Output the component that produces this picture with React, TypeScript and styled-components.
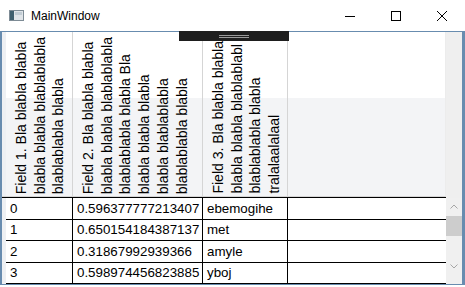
import React from 'react'
import styled, { createGlobalStyle } from 'styled-components'

const GlobalStyle = createGlobalStyle`
  html, body {
    margin: 0;
    padding: 0;
    background: #fff;
  }
  body {
    font-family: "Liberation Sans", Arial, sans-serif;
    color: #000;
  }
`

const Window = styled.div`
  position: relative;
  width: 465px;
  height: 287px;
  overflow: hidden;
  display: flex;
  flex-direction: column;
  background: #fff;
`

const TitleBar = styled.div`
  flex: none;
  height: 31px;
  display: flex;
  align-items: center;
  padding-left: 9px;
`

const Title = styled.span`
  flex: 1;
  margin-left: 7px;
  font-size: 12px;
`

const CaptionButton = styled.div`
  width: 46px;
  height: 31px;
  display: flex;
  align-items: center;
  justify-content: center;
`

const Client = styled.div`
  flex: none;
  height: 252px;
  display: flex;
  border: 1px solid #688caf;
  border-left-width: 2px;
  border-right-width: 3px;
`

const GridArea = styled.div`
  flex: 1;
  min-width: 0;
  display: flex;
  flex-direction: column;
  overflow: hidden;
`

const RowGrid = styled.div`
  display: grid;
  grid-template-columns: 4px 67px 130px 85px 1fr;
`

const HeaderRow = styled(RowGrid)`
  flex: none;
  height: 165px;
  border-bottom: 1px solid #000;
`

const Corner = styled.div`
  background: #eef0f3;
  border-bottom: 1px solid #d5d5d5;
`

const ColumnHeader = styled.div<{ filler?: boolean }>`
  display: flex;
  align-items: flex-end;
  padding: 0 0 2px 6px;
  overflow: hidden;
  background: linear-gradient(to bottom, #fff 0, #fff 40%, #f3f4f6 40%, #f3f4f6 100%);
  border-right: 1px solid ${p => (p.filler ? '#ececec' : '#d5d5d5')};
  border-bottom: 1px solid #d5d5d5;
`

const HeaderText = styled.div`
  writing-mode: vertical-rl;
  transform: rotate(180deg);
  font-size: 14px;
  line-height: 18.7px;
  white-space: nowrap;
`

const DataRow = styled(RowGrid)`
  height: 21.5px;
`

const RowHeader = styled.div`
  background: #eef0f3;
`

const Cell = styled.div<{ last?: boolean }>`
  display: flex;
  align-items: center;
  padding-left: 4px;
  font-size: 13.33px;
  white-space: nowrap;
  overflow: hidden;
  border-bottom: 1px solid #000;
  border-right: ${p => (p.last ? 'none' : '1px solid #000')};
`

const ScrollColumn = styled.div`
  flex: none;
  width: 16px;
  display: flex;
  flex-direction: column;
  background: #f0f0f0;
`

const ScrollCorner = styled.div`
  flex: none;
  height: 166px;
  background: #efefef;
`

const ArrowButton = styled.div`
  flex: none;
  height: 17px;
  display: flex;
  align-items: center;
  justify-content: center;
`

const Track = styled.div`
  flex: 1;
  padding-top: 1px;
`

const Thumb = styled.div`
  height: 20px;
  background: #cdcdcd;
`

const BottomSpacer = styled.div`
  flex: none;
  height: 9px;
`

const InAppToolbar = styled.div`
  position: absolute;
  left: 179px;
  top: 31px;
  width: 110px;
  height: 10px;
  background: #1e1e1e;
  display: flex;
  align-items: center;
  justify-content: center;
`

const Grip = styled.div`
  width: 30px;
  height: 1px;
  border-top: 1px solid #9a9a9a;
  border-bottom: 1px solid #9a9a9a;
`

const headers = [
  ['Field 1. Bla blabla blabla', 'blabla blabla blablablabla', 'blablablabla blabla'],
  [
    'Field 2. Bla blabla blabla',
    'blabla blabla blablablabla',
    'blablablabla blabla Bla',
    'blabla blabla blabla',
    'blabla blablablabla',
    'blablablabla blabla',
  ],
  ['Field 3. Bla blabla blabla', 'blabla blabla blablablabl', 'blablablabla blabla', 'tralalaalalaal'],
]

const rows = [
  ['0', '0.596377777213407', 'ebemogihe'],
  ['1', '0.650154184387137', 'met'],
  ['2', '0.31867992939366', 'amyle'],
  ['3', '0.598974456823885', 'yboj'],
]

const AppIcon = () => (
  <svg width="15" height="11" viewBox="0 0 15 11">
    <rect x="0.5" y="0.5" width="14" height="10" fill="#dfe4e8" stroke="#7d8b95" />
    <rect x="1" y="1" width="4" height="9" fill="#3f5f6e" />
    <rect x="6" y="2" width="7" height="3" fill="#c1ccd4" />
  </svg>
)

const Chevron = ({ up }: { up?: boolean }) => (
  <svg width="8" height="5" viewBox="0 0 8 5">
    <path d={up ? 'M0.5 4.5 L4 1 L7.5 4.5' : 'M0.5 0.5 L4 4 L7.5 0.5'} fill="none" stroke="#a6a6a6" strokeWidth="1" />
  </svg>
)

export default function App() {
  return (
    <>
      <GlobalStyle />
      <Window>
        <TitleBar>
          <AppIcon />
          <Title>MainWindow</Title>
          <CaptionButton>
            <svg width="10" height="10" viewBox="0 0 10 10">
              <path d="M0 5.5 H10" stroke="#000" strokeWidth="1" />
            </svg>
          </CaptionButton>
          <CaptionButton>
            <svg width="10" height="10" viewBox="0 0 10 10">
              <rect x="0.5" y="0.5" width="9" height="9" fill="none" stroke="#000" strokeWidth="1" />
            </svg>
          </CaptionButton>
          <CaptionButton>
            <svg width="10" height="10" viewBox="0 0 10 10">
              <path d="M0 0 L10 10 M10 0 L0 10" stroke="#000" strokeWidth="1" />
            </svg>
          </CaptionButton>
        </TitleBar>
        <Client>
          <GridArea>
            <HeaderRow>
              <Corner />
              {headers.map((lines, i) => (
                <ColumnHeader key={i}>
                  <HeaderText>
                    {lines.map(line => (
                      <div key={line}>{line}</div>
                    ))}
                  </HeaderText>
                </ColumnHeader>
              ))}
              <ColumnHeader filler />
            </HeaderRow>
            {rows.map(row => (
              <DataRow key={row[0]}>
                <RowHeader />
                {row.map((value, i) => (
                  <Cell key={i}>{value}</Cell>
                ))}
                <Cell last />
              </DataRow>
            ))}
          </GridArea>
          <ScrollColumn>
            <ScrollCorner />
            <ArrowButton>
              <Chevron up />
            </ArrowButton>
            <Track>
              <Thumb />
            </Track>
            <ArrowButton>
              <Chevron />
            </ArrowButton>
            <BottomSpacer />
          </ScrollColumn>
        </Client>
        <InAppToolbar>
          <Grip />
        </InAppToolbar>
      </Window>
    </>
  )
}
